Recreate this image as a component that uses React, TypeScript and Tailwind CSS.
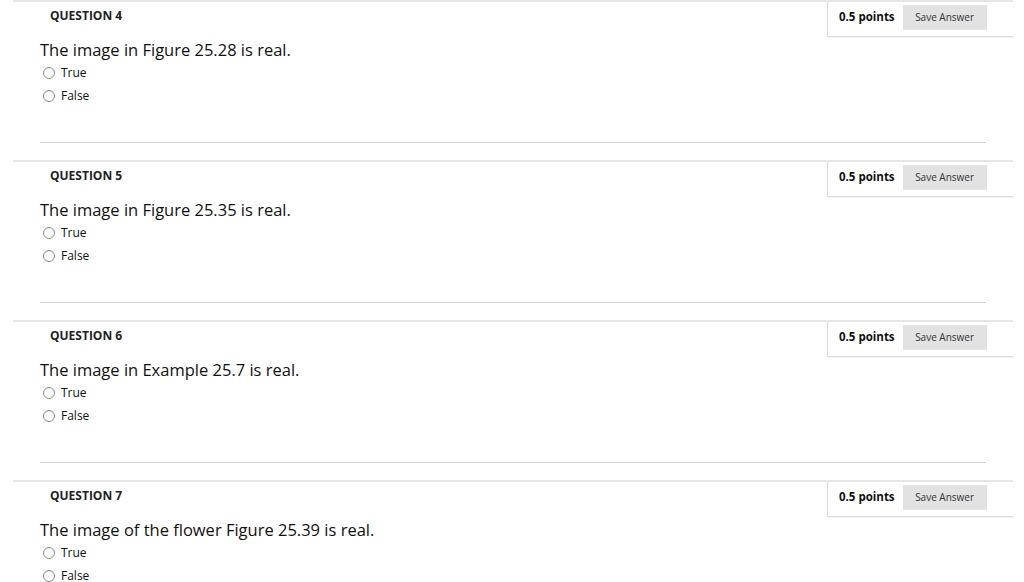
const questions = [
  { num: 4, text: 'The image in Figure 25.28 is real.' },
  { num: 5, text: 'The image in Figure 25.35 is real.' },
  { num: 6, text: 'The image in Example 25.7 is real.' },
  { num: 7, text: 'The image of the flower Figure 25.39 is real.' },
];

function Radio({ label }: { label: string }) {
  return (
    <label className="flex items-center h-[23px] text-[12px] text-[#111]">
      <span className="ml-[3px] w-[12px] h-[12px] rounded-full border border-[#8a8a8a] bg-white shadow-[inset_0_1px_1px_rgba(0,0,0,0.08)]" />
      <span className="ml-[6px]">{label}</span>
    </label>
  );
}

function Question({ num, text }: { num: number; text: string }) {
  return (
    <div className="h-[160px]">
      <div className="ml-[13px] w-[1000px] border-t-2 border-[#e6e6e6]">
        <div className="flex justify-between h-[35px]">
          <div className="pl-[37px] pt-[5px] text-[12px] font-bold text-[#222]">
            QUESTION {num}
          </div>
          <div className="w-[186px] h-[35px] border-l border-b border-[#dcdcdc] flex items-start pl-[11px] shadow-[0_1px_1px_rgba(0,0,0,0.05)]">
            <span className="mt-[6px] text-[11.5px] font-bold text-[#111]">0.5 points</span>
            <button className="ml-[8px] mt-[3px] w-[84px] h-[25px] bg-[#e2e2e2] text-[10px] text-[#333]">
              Save Answer
            </button>
          </div>
        </div>
        <div className="pl-[27px]">
          <div className="mt-[3px] h-[20px] leading-[20px] text-[16.5px] text-[#111]">{text}</div>
          <div className="mt-[1px]">
            <Radio label="True" />
            <Radio label="False" />
          </div>
          <div className="mt-[35px] w-[946px] border-t border-[#d4d4d4]" />
        </div>
      </div>
    </div>
  );
}

export default function App() {
  return (
    <div className="w-[1024px] h-[582px] overflow-hidden bg-white font-['Open_Sans',sans-serif]">
      {questions.map((q) => (
        <Question key={q.num} num={q.num} text={q.text} />
      ))}
    </div>
  );
}
